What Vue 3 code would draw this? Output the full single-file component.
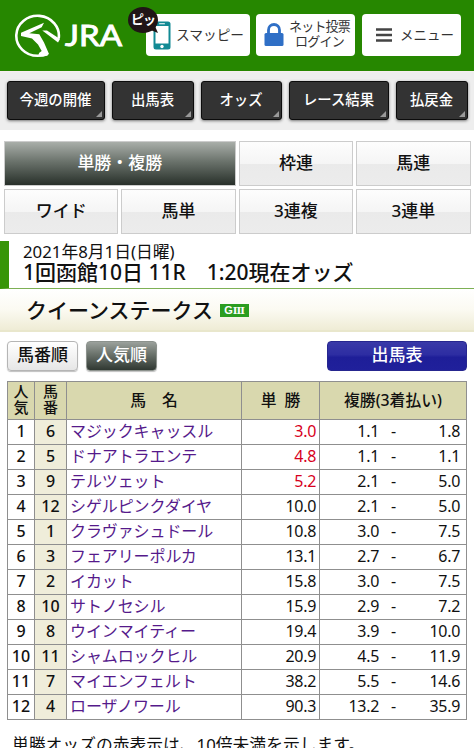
<template>
  <div class="page">
    <header class="header">
      <svg class="logo" width="112" height="46" viewBox="0 0 112 46">
        <path
          d="M34.500 40 C31 41.500 28 41.800 24.500 41.800 A21.300 20 0 1 1 45.700 24.500"
          fill="none"
          stroke="#fff"
          stroke-width="2.600"
        />
        <path
          d="M8 18.700 L31 8.700 L28.700 13.300 L16.300 19.300 L26.300 20.300 L31 28.500 L36 40 L33 42 L25.500 42 L26 39 L28.700 37 L25 30.500 L19 24.500 L8 22 Z"
          fill="#fff"
        />
        <path d="M29.300 16.500 L34 16.500 L47 25 L45 28.500 Z" fill="#fff" />
        <text x="52" y="32" class="logo-text" textLength="57" lengthAdjust="spacingAndGlyphs">JRA</text>
      </svg>

      <div class="header-btn smappy">
        <svg class="phone" width="18" height="29" viewBox="0 0 18 29">
          <rect x="0.500" y="0.500" width="17" height="28" rx="2.500" fill="#128a94" />
          <rect x="2.500" y="5" width="13" height="17.500" fill="#fff" />
          <rect x="6" y="2.200" width="6" height="1" rx="0.500" fill="#fff" />
          <circle cx="9" cy="25.500" r="1.700" fill="#fff" />
        </svg>
        <span>スマッピー</span>
        <div class="bubble">
          <svg width="32" height="28" viewBox="0 0 32 28">
            <ellipse cx="15" cy="13" rx="15" ry="13" fill="#201516" />
            <path d="M20 22 L30 26 L26 17 Z" fill="#201516" />
          </svg>
          <span class="bubble-text">ピッ</span>
        </div>
      </div>

      <div class="header-btn login">
        <svg width="20" height="24" viewBox="0 0 20 24">
          <path d="M4.500 11 V7 A5.500 5.500 0 0 1 15.500 7 V11" fill="none" stroke="#2f6fc6" stroke-width="2.800" />
          <rect x="0.500" y="10" width="19" height="13" rx="1.500" fill="#2f6fc6" />
        </svg>
        <span class="login-text">ネット投票<br />ログイン</span>
      </div>

      <div class="header-btn menu">
        <svg width="16" height="14" viewBox="0 0 16 14">
          <path d="M0 1.500 H16 M0 7 H16 M0 12.500 H16" stroke="#444" stroke-width="2.400" />
        </svg>
        <span>メニュー</span>
      </div>
    </header>

    <nav class="nav">
      <div v-for="item in navItems" :key="item" class="nav-item">{{ item }}</div>
    </nav>

    <div class="tabs">
      <div
        v-for="tab in tabs"
        :key="tab"
        class="tab"
        :class="{ active: tab === activeTab }"
        @click="activeTab = tab"
      >
        {{ tab }}
      </div>
    </div>

    <div class="race-info">
      <div class="race-date">2021年8月1日(日曜)</div>
      <div class="race-title">1回函館10日 11R　1:20現在オッズ</div>
    </div>
    <div class="race-name">
      <span class="race-name-text">クイーンステークス</span>
      <span class="grade">G<span class="grade-num">Ⅲ</span></span>
    </div>

    <div class="sort-row">
      <button class="sort-btn">馬番順</button>
      <button class="sort-btn selected">人気順</button>
      <button class="entry-btn">出馬表</button>
    </div>

    <table class="odds">
      <colgroup>
        <col class="col-rank" />
        <col class="col-num" />
        <col class="col-name" />
        <col class="col-win" />
        <col class="col-place" />
      </colgroup>
      <thead>
        <tr>
          <th class="stack">人<br />気</th>
          <th class="stack">馬<br />番</th>
          <th class="name-head">馬　名</th>
          <th class="win-head">単 勝</th>
          <th>複勝(3着払い)</th>
        </tr>
      </thead>
      <tbody>
        <tr v-for="(h, i) in horses" :key="h.num">
          <td class="rank">{{ i + 1 }}</td>
          <td class="num">{{ h.num }}</td>
          <td class="name">{{ h.name }}</td>
          <td class="win" :class="{ low: Number(h.win) < 10 }">{{ h.win }}</td>
          <td>
            <div class="place">
              <span class="min">{{ h.min }}</span>
              <span class="dash">-</span>
              <span class="max">{{ h.max }}</span>
            </div>
          </td>
        </tr>
      </tbody>
    </table>

    <p class="note">単勝オッズの赤表示は、10倍未満を示します。</p>
  </div>
</template>

<script setup>
import { ref } from 'vue'

const navItems = ['今週の開催', '出馬表', 'オッズ', 'レース結果', '払戻金']

const tabs = ['単勝・複勝', '枠連', '馬連', 'ワイド', '馬単', '3連複', '3連単']
const activeTab = ref('単勝・複勝')

const horses = [
  { num: 6, name: 'マジックキャッスル', win: '3.0', min: '1.1', max: '1.8' },
  { num: 5, name: 'ドナアトラエンテ', win: '4.8', min: '1.1', max: '1.1' },
  { num: 9, name: 'テルツェット', win: '5.2', min: '2.1', max: '5.0' },
  { num: 12, name: 'シゲルピンクダイヤ', win: '10.0', min: '2.1', max: '5.0' },
  { num: 1, name: 'クラヴァシュドール', win: '10.8', min: '3.0', max: '7.5' },
  { num: 3, name: 'フェアリーポルカ', win: '13.1', min: '2.7', max: '6.7' },
  { num: 2, name: 'イカット', win: '15.8', min: '3.0', max: '7.5' },
  { num: 10, name: 'サトノセシル', win: '15.9', min: '2.9', max: '7.2' },
  { num: 8, name: 'ウインマイティー', win: '19.4', min: '3.9', max: '10.0' },
  { num: 11, name: 'シャムロックヒル', win: '20.9', min: '4.5', max: '11.9' },
  { num: 7, name: 'マイエンフェルト', win: '38.2', min: '5.5', max: '14.6' },
  { num: 4, name: 'ローザノワール', win: '90.3', min: '13.2', max: '35.9' },
]
</script>

<style>
body {
  background: #fff;
  overflow: hidden;
}
</style>

<style scoped>
.page {
  width: 474px;
  height: 748px;
  overflow: hidden;
  background: #fff;
  color: #111;
  font-family: 'Noto Sans', 'Noto Sans CJK JP', sans-serif;
  font-size: 16px;
  box-sizing: border-box;
}

.page * {
  box-sizing: border-box;
}

/* Header */
.header {
  display: flex;
  align-items: flex-start;
  height: 71px;
  padding: 14px 13px 0 13px;
  background: #268700;
}

.logo {
  flex: none;
  margin-right: 21px;
}

.logo-text {
  font-family: Lato, sans-serif;
  font-size: 28px;
  fill: #fff;
  stroke: #fff;
  stroke-width: 0.9px;
}

.header-btn {
  position: relative;
  display: flex;
  align-items: center;
  height: 42px;
  background: #fff;
  border-radius: 4px;
  color: #333;
  font-size: 14px;
  white-space: nowrap;
}

.header-btn > span {
  position: relative;
  top: -1px;
}

.smappy {
  width: 104px;
  padding-left: 7px;
  gap: 5px;
  margin-right: 6px;
  font-size: 13.7px;
}

.login {
  width: 99px;
  padding-left: 8px;
  gap: 5px;
  margin-right: 7px;
}

.login-text {
  width: 61px;
  font-size: 13px;
  line-height: 15px;
  letter-spacing: -0.8px;
  text-align: center;
}

.menu {
  width: 99px;
  padding-left: 14px;
  gap: 8px;
  font-size: 13.5px;
}

.bubble {
  position: absolute;
  left: -18px;
  top: -7px;
  width: 32px;
  height: 28px;
}

.bubble-text {
  position: absolute;
  left: 3px;
  top: 3px;
  color: #fff;
  font-size: 13px;
  font-weight: 700;
  line-height: 18px;
  letter-spacing: -1px;
}

/* Nav */
.nav {
  display: grid;
  grid-template-columns: 98px 82px 81px 100px 72px;
  gap: 7px;
  height: 59px;
  padding: 9px 0 0 6.5px;
  background: #eee;
  border-top: 1px solid #f8eef0;
}

.nav-item {
  position: relative;
  height: 39px;
  line-height: 35px;
  border: 1px solid #0c0c0c;
  border-radius: 3px;
  background: #333;
  box-shadow: 0 1px 3px rgba(0, 0, 0, 0.5);
  color: #fff;
  font-size: 14.4px;
  font-weight: 500;
  text-align: center;
}

.nav-item::after {
  content: '';
  position: absolute;
  right: 2px;
  bottom: 2px;
  border-left: 6px solid transparent;
  border-bottom: 6px solid #999;
}

/* Tabs */
.tabs {
  display: grid;
  grid-template-columns: repeat(4, 1fr);
  grid-auto-rows: 45px;
  gap: 2.5px 3px;
  padding: 11px 3.5px 0 4px;
}

.tab {
  display: flex;
  align-items: center;
  justify-content: center;
  padding-bottom: 4px;
  border: 1px solid #ccc;
  background: linear-gradient(#fdfdfd, #f5f5f5 50%, #eaeaea 51%, #ececec);
  font-size: 17px;
  font-weight: 500;
}

.tab:first-child {
  grid-column: span 2;
}

.tab.active {
  background: linear-gradient(#a9aea9, #6b736c 45%, #28302a);
  color: #fff;
}

/* Race heading */
.race-info {
  height: 48px;
  margin-top: 7.5px;
  padding-left: 14px;
  border-left: 9px solid #379508;
  border-bottom: 1px solid #7db055;
}

.race-date {
  font-size: 16.8px;
  line-height: 21px;
}

.race-title {
  font-size: 21px;
  font-weight: 500;
  line-height: 21px;
  white-space: nowrap;
}

.race-name {
  display: flex;
  align-items: center;
  height: 43px;
  padding-left: 26px;
  background: linear-gradient(#fff, #fbfaf2 50%, #efecd5);
  border-bottom: 2px solid #e9e7cc;
}

.race-name-text {
  font-size: 21px;
  font-weight: 500;
  line-height: 30px;
}

.grade {
  display: flex;
  align-items: center;
  justify-content: center;
  width: 29px;
  height: 13px;
  margin: 2px 0 0 7px;
  background: #2b9d20;
  color: #fff;
  font-family: 'Liberation Sans', sans-serif;
  font-size: 11px;
  font-weight: 700;
  line-height: 13px;
}

.grade-num {
  font-family: 'DejaVu Serif', serif;
  font-size: 10px;
  line-height: 13px;
  letter-spacing: -0.5px;
}

/* Sort buttons */
.sort-row {
  display: flex;
  gap: 8px;
  height: 49px;
  padding: 9px 7px 0 7px;
}

.sort-btn,
.entry-btn {
  height: 30px;
  padding: 0 0 2px;
  border: 1px solid #b5b5b5;
  border-radius: 4px;
  background: linear-gradient(#fff, #f3f3f3 50%, #e6e6e6);
  color: #111;
  font-family: inherit;
  font-size: 17px;
  font-weight: 500;
  line-height: 26px;
}

.sort-btn {
  width: 71px;
  box-shadow: 0 1px 1px rgba(0, 0, 0, 0.25);
}

.sort-btn.selected {
  border-color: #8c928d;
  background: linear-gradient(#9ba19c, #69716a 45%, #303832);
  color: #fff;
}

.entry-btn {
  width: 140px;
  margin-left: auto;
  border-color: #26268f;
  background: linear-gradient(#3939a8, #2d2da2 45%, #1e1e98 55%, #20209b);
  color: #fff;
}

/* Odds table */
.odds {
  width: 460px;
  margin-left: 7px;
  border-collapse: collapse;
  table-layout: fixed;
}

.col-rank {
  width: 27px;
}

.col-num {
  width: 32px;
}

.col-name {
  width: 175px;
}

.col-win {
  width: 78px;
}

.odds th,
.odds td {
  padding: 0;
  border: 1px solid #8f8f8f;
  white-space: nowrap;
}

.odds th {
  height: 38px;
  padding-bottom: 2px;
  background: #d9d8ae;
  font-size: 15.8px;
  font-weight: 500;
  line-height: 16px;
}

.odds .stack {
  font-size: 15px;
  line-height: 15.5px;
}

.win-head {
  word-spacing: 4px;
}

.odds td {
  height: 25px;
  font-size: 16px;
  line-height: 23px;
  vertical-align: top;
}

.odds .rank,
.odds .num {
  font-weight: 500;
  text-align: center;
}

.num {
  background: #efedda;
}

.odds td.name {
  padding-left: 3px;
  color: #551a8b;
  letter-spacing: -0.1px;
}

.odds td.win {
  padding-right: 3px;
  text-align: right;
  letter-spacing: -0.3px;
}

.odds td.low {
  color: #d7001d;
}

.place {
  display: grid;
  grid-template-columns: 59px 1fr 56px;
  padding-right: 6px;
  letter-spacing: -0.3px;
}

.place .min,
.place .max {
  text-align: right;
}

.place .dash {
  padding-left: 12px;
}

.note {
  margin: 12px 0 0 12px;
  font-size: 16.8px;
  line-height: 25px;
  white-space: nowrap;
}
</style>
